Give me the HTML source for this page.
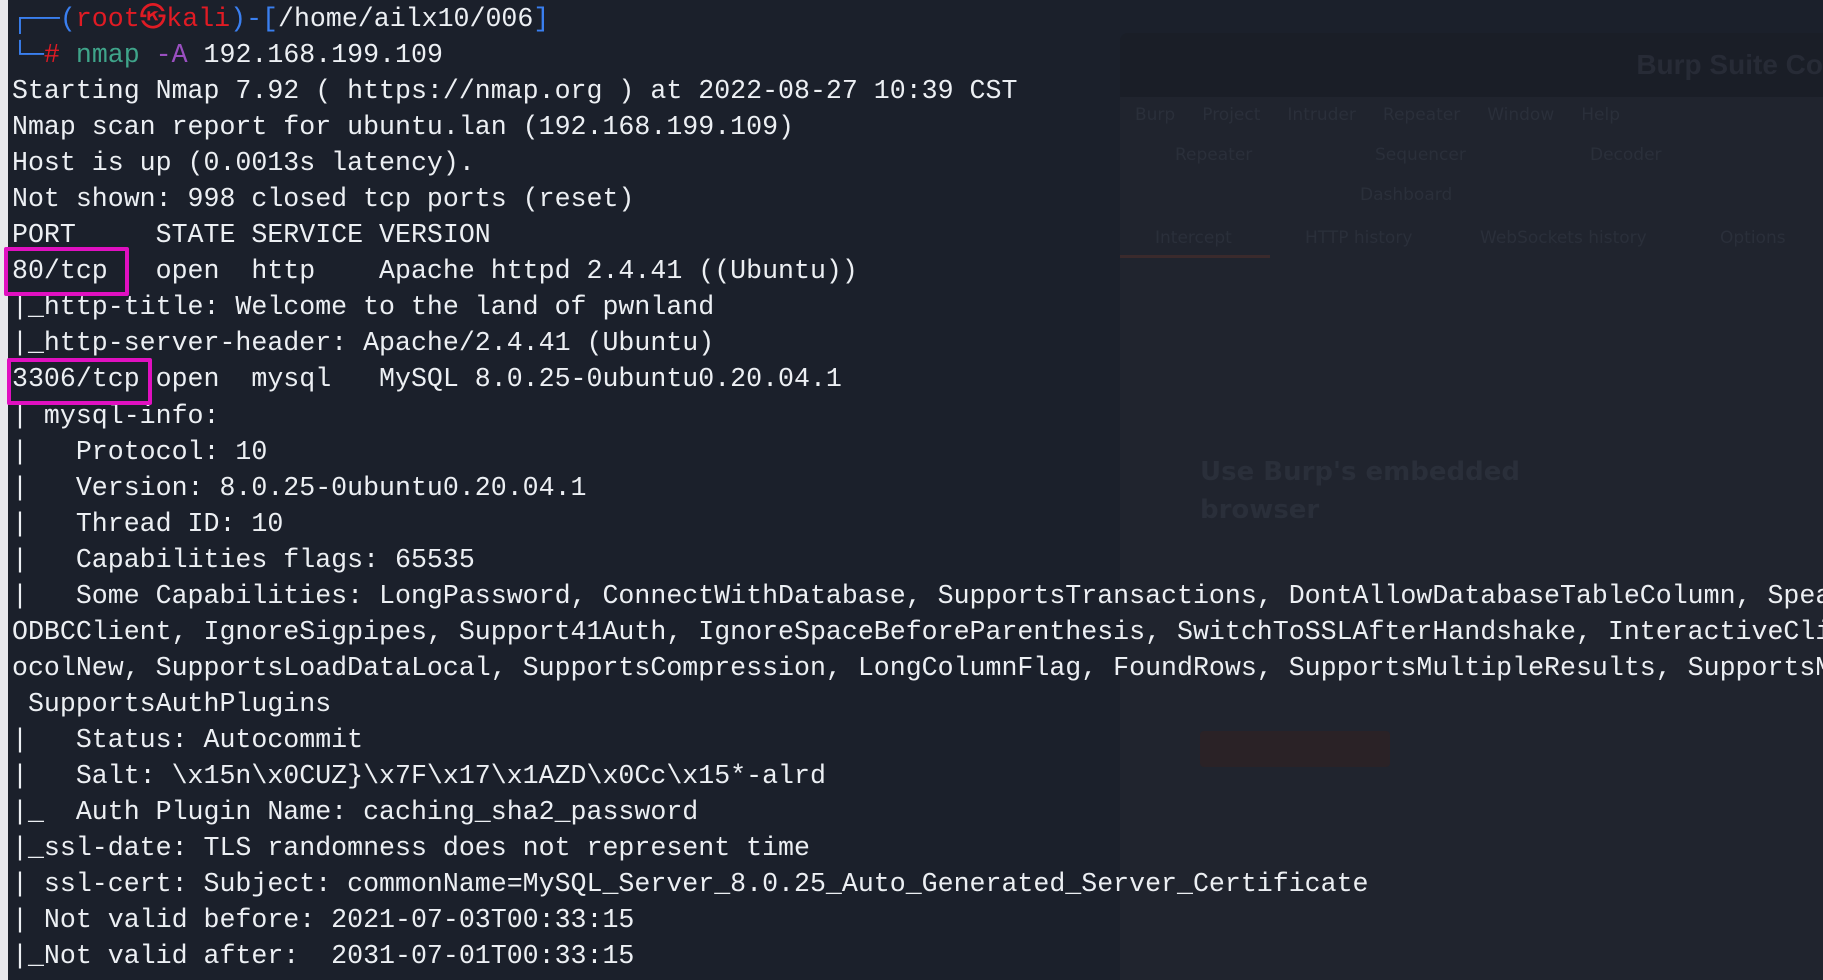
<!DOCTYPE html>
<html><head><meta charset="utf-8"><style>
html,body{margin:0;padding:0;width:1823px;height:980px;overflow:hidden;background:#1b202b;}
#strip{position:absolute;left:0;top:0;width:8px;height:980px;background:#e8e8ec;}
#burp{position:absolute;left:1120px;top:33px;width:703px;height:947px;background:#20242e;border-radius:8px 0 0 0;}
#burp .tb{height:64px;background:#1a1e27;border-radius:8px 0 0 0;color:#272b36;font:bold 28px "Liberation Sans",sans-serif;text-align:right;line-height:64px;}
#burp .m{position:absolute;color:#2a2f3a;font:17px "DejaVu Sans",sans-serif;}
#wrap{position:absolute;left:0;top:0;width:1823px;height:980px;overflow:hidden;}
#term{position:absolute;left:12px;top:1px;font-family:"Liberation Mono",monospace;font-size:26.6px;line-height:36.05px;color:#eceff3;white-space:pre;}
.r{color:#e01b24}.b{color:#3a7ff0}.g{color:#3fa48a}.p{color:#9a4fc0}
.box{position:absolute;border:4px solid #e010c0;border-radius:2px;}
</style></head><body>
<div id="strip"></div>
<div id="burp"><div class="tb">Burp Suite Co</div>
<div class="m" style="left:15px;top:72px">Burp &nbsp;&nbsp;&nbsp; Project &nbsp;&nbsp;&nbsp; Intruder &nbsp;&nbsp;&nbsp; Repeater &nbsp;&nbsp;&nbsp; Window &nbsp;&nbsp;&nbsp; Help</div>
<div class="m" style="left:55px;top:112px">Repeater</div><div class="m" style="left:255px;top:112px">Sequencer</div><div class="m" style="left:470px;top:112px">Decoder</div>
<div class="m" style="left:240px;top:152px">Dashboard</div>
<div class="m" style="left:35px;top:195px">Intercept</div><div class="m" style="left:185px;top:195px">HTTP history</div><div class="m" style="left:360px;top:195px">WebSockets history</div><div class="m" style="left:600px;top:195px">Options</div>
<div style="position:absolute;left:0;top:222px;width:150px;height:3px;background:#3a2a2c"></div>
<div class="m" style="left:80px;top:420px;font-size:26px;font-weight:bold;line-height:38px">Use Burp's embedded<br>browser</div>
<div style="position:absolute;left:80px;top:698px;width:190px;height:36px;background:#2a2226;border-radius:4px"></div>
</div>
<div id="wrap"><div id="term"><span class="b">┌──(</span><span class="r">root㉿kali</span><span class="b">)-[</span>/home/ailx10/006<span class="b">]</span>
<span class="b">└─</span><span class="r">#</span> <span class="g">nmap</span> <span class="p">-A</span> 192.168.199.109
Starting Nmap 7.92 ( https://nmap.org ) at 2022-08-27 10:39 CST
Nmap scan report for ubuntu.lan (192.168.199.109)
Host is up (0.0013s latency).
Not shown: 998 closed tcp ports (reset)
PORT     STATE SERVICE VERSION
80/tcp   open  http    Apache httpd 2.4.41 ((Ubuntu))
|_http-title: Welcome to the land of pwnland
|_http-server-header: Apache/2.4.41 (Ubuntu)
3306/tcp open  mysql   MySQL 8.0.25-0ubuntu0.20.04.1
| mysql-info: 
|   Protocol: 10
|   Version: 8.0.25-0ubuntu0.20.04.1
|   Thread ID: 10
|   Capabilities flags: 65535
|   Some Capabilities: LongPassword, ConnectWithDatabase, SupportsTransactions, DontAllowDatabaseTableColumn, Spea
ODBCClient, IgnoreSigpipes, Support41Auth, IgnoreSpaceBeforeParenthesis, SwitchToSSLAfterHandshake, InteractiveCli
ocolNew, SupportsLoadDataLocal, SupportsCompression, LongColumnFlag, FoundRows, SupportsMultipleResults, SupportsM
 SupportsAuthPlugins
|   Status: Autocommit
|   Salt: \x15n\x0CUZ}\x7F\x17\x1AZD\x0Cc\x15*-alrd
|_  Auth Plugin Name: caching_sha2_password
|_ssl-date: TLS randomness does not represent time
| ssl-cert: Subject: commonName=MySQL_Server_8.0.25_Auto_Generated_Server_Certificate
| Not valid before: 2021-07-03T00:33:15
|_Not valid after:  2031-07-01T00:33:15
</div></div>
<div class="box" style="left:4px;top:247px;width:117px;height:41px"></div>
<div class="box" style="left:7px;top:358px;width:137px;height:39px"></div>
</body></html>
